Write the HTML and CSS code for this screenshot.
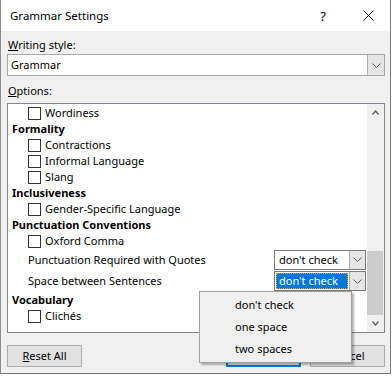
FILE: index.html
```html
<!DOCTYPE html>
<html lang="en">
<head>
    <meta charset="UTF-8">
    <title>Grammar Settings</title>
    <link rel="stylesheet" href="styles.css">
</head>
<body>
    <div class="dialog">
        <!-- Title bar -->
        <div class="titlebar">
            <span class="title">Grammar Settings</span>
            <span class="help">?</span>
            <svg class="close" width="11" height="11" viewBox="0 0 11 11">
                <path d="M0.5 0.5 L10.5 10.5 M10.5 0.5 L0.5 10.5" stroke="#111" stroke-width="1" fill="none"/>
            </svg>
        </div>

        <div class="content">
            <div class="label"><u>W</u>riting style:</div>
            <div class="combo big">
                <span class="value">Grammar</span>
                <span class="drop">
                    <svg width="9" height="5" viewBox="0 0 9 5"><path d="M0.5 0.5 L4.5 4.5 L8.5 0.5" stroke="#606060" fill="none"/></svg>
                </span>
            </div>

            <div class="label options-label"><u>O</u>ptions:</div>
            <div class="listbox">
                <div class="items">
                    <div class="row check"><span class="box"></span>Wordiness</div>
                    <div class="row group">Formality</div>
                    <div class="row check"><span class="box"></span>Contractions</div>
                    <div class="row check"><span class="box"></span>Informal Language</div>
                    <div class="row check"><span class="box"></span>Slang</div>
                    <div class="row group">Inclusiveness</div>
                    <div class="row check"><span class="box"></span>Gender-Specific Language</div>
                    <div class="row group">Punctuation Conventions</div>
                    <div class="row check"><span class="box"></span>Oxford Comma</div>
                    <div class="row setting">
                        <span>Punctuation Required with Quotes</span>
                        <span class="combo small">
                            <span class="value">don't check</span>
                            <span class="drop">
                                <svg width="9" height="5" viewBox="0 0 9 5"><path d="M0.5 0.5 L4.5 4.5 L8.5 0.5" stroke="#606060" fill="none"/></svg>
                            </span>
                        </span>
                    </div>
                    <div class="row setting">
                        <span>Space between Sentences</span>
                        <span class="combo small focused">
                            <span class="value"><span class="sel">don't check</span></span>
                            <span class="drop">
                                <svg width="9" height="5" viewBox="0 0 9 5"><path d="M0.5 0.5 L4.5 4.5 L8.5 0.5" stroke="#606060" fill="none"/></svg>
                            </span>
                        </span>
                    </div>
                    <div class="row group">Vocabulary</div>
                    <div class="row check"><span class="box"></span>Clichés</div>
                </div>

                <div class="scrollbar">
                    <div class="arrow">
                        <svg width="7" height="5" viewBox="0 0 7 5"><path d="M0.5 4.5 L3.5 1 L6.5 4.5" stroke="#606060" stroke-width="1.4" fill="none"/></svg>
                    </div>
                    <div class="track"><div class="thumb"></div></div>
                    <div class="arrow">
                        <svg width="7" height="5" viewBox="0 0 7 5"><path d="M0.5 0.5 L3.5 4 L6.5 0.5" stroke="#606060" stroke-width="1.4" fill="none"/></svg>
                    </div>
                </div>
            </div>

            <div class="buttons">
                <button class="btn"><u>R</u>eset All</button>
                <span class="spacer"></span>
                <button class="btn default">OK</button>
                <button class="btn">Cancel</button>
            </div>
        </div>

        <!-- Open drop-down list -->
        <ul class="popup">
            <li>don't check</li>
            <li>one space</li>
            <li>two spaces</li>
        </ul>
    </div>
</body>
</html>
```

FILE: styles.css
```css
/* Basic Reset */
* {
    box-sizing: border-box;
    margin: 0;
    padding: 0;
}

body {
    background: #fff;
    font-family: "Noto Sans", "Liberation Sans", sans-serif;
    font-size: 11px;
    line-height: 16px;
    color: #000;
}

/* Dialog frame */
.dialog {
    position: relative;
    width: 391px;
    height: 374px;
    border-left: 1px solid #8c8c8c;
    border-right: 1px solid #7a7a7a;
    border-bottom: 1px solid #7a7a7a;
    display: flex;
    flex-direction: column;
}

/* Title bar */
.titlebar {
    height: 31px;
    background: #fff;
    display: flex;
    align-items: center;
    padding-left: 9px;
}

.title {
    font-size: 11.5px;
    flex: 1;
}

.help {
    font-size: 13px;
    margin-right: 37px;
}

.close {
    margin-right: 16px;
}

/* Content area */
.content {
    flex: 1;
    background: #f0f0f0;
    padding: 0 5px 0 6px;
}

.label {
    margin-top: 6px;
    padding-left: 1px;
}

.options-label {
    margin-top: 7px;
}

/* Combo boxes */
.combo {
    display: flex;
    background: #fff;
    border: 1px solid #a8a8a8;
}

.combo .value {
    flex: 1;
    display: flex;
    align-items: center;
}

.combo .drop {
    width: 17px;
    background: #e5e5e5;
    border-left: 1px solid #adadad;
    display: flex;
    align-items: center;
    justify-content: center;
}

.combo.big {
    height: 22px;
    margin-top: 1px;
}

.combo.big .value {
    padding-left: 3px;
}

.combo.small {
    width: 92px;
    height: 20px;
    margin-right: 1px;
    border-color: #7a7a7a;
}

.combo.small .value {
    padding-left: 4px;
}

.combo.small .drop {
    width: 16px;
}

.combo.focused .value {
    padding: 1px;
}

.combo .sel {
    flex: 1;
    height: 100%;
    background: #0078d7;
    color: #fff;
    padding-left: 3px;
    outline: 1px dotted #e8a040;
    outline-offset: -1px;
    display: flex;
    align-items: center;
}

/* Options list */
.listbox {
    margin-top: 4px;
    height: 230px;
    display: flex;
    background: #fff;
    border: 1px solid #828790;
}

.items {
    flex: 1;
    padding-top: 1px;
}

.row {
    height: 16px;
    display: flex;
    align-items: center;
}

.row.group {
    font-weight: bold;
    padding-left: 4px;
}

.row.check {
    padding-left: 20px;
}

.row.setting {
    height: 21.5px;
    padding-left: 20px;
    justify-content: space-between;
}

.box {
    width: 13px;
    height: 13px;
    border: 1px solid #333;
    background: #fff;
    margin-right: 4px;
}

/* Scrollbar */
.scrollbar {
    width: 17px;
    background: #f0f0f0;
    display: flex;
    flex-direction: column;
}

.arrow {
    height: 17px;
    display: flex;
    align-items: center;
    justify-content: center;
}

.track {
    flex: 1;
    display: flex;
    flex-direction: column;
    justify-content: flex-end;
}

.thumb {
    height: 64px;
    margin: 0 1px 0 0;
    background: #cdcdcd;
}

/* Bottom buttons */
.buttons {
    display: flex;
    gap: 9px;
    margin-top: 12px;
}

.spacer {
    flex: 1;
}

.btn {
    width: 75px;
    height: 22px;
    font: inherit;
    color: #000;
    background: #e1e1e1;
    border: 1px solid #adadad;
}

.btn.default {
    border: 2px solid #0078d7;
}

/* Drop-down list */
.popup {
    position: absolute;
    left: 198px;
    top: 291px;
    width: 153px;
    padding: 2px 0;
    list-style: none;
    background: #f0f0f0;
    border: 1px solid #a0a0a0;
    box-shadow: 2px 2px 2px rgba(0, 0, 0, 0.3);
}

.popup li {
    height: 22px;
    line-height: 22px;
    padding-left: 35px;
}
```
